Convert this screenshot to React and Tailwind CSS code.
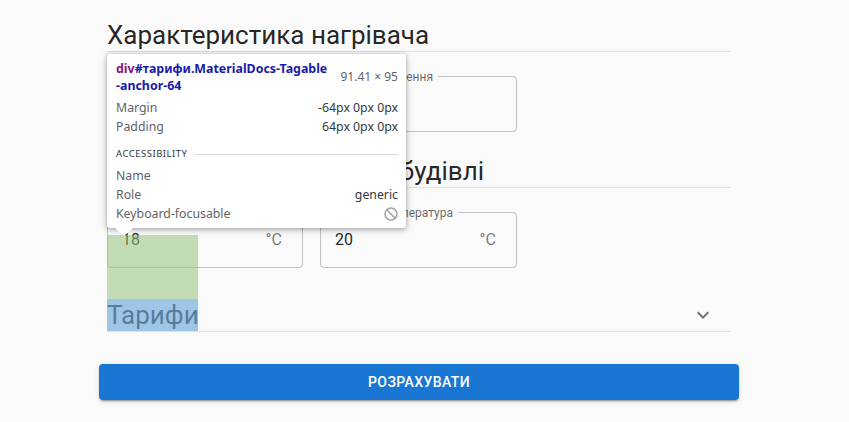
import React from "react";

function Field({ label, labelRight, value, unit, className }) {
  return (
    <div className={"relative h-[56px] rounded-[4px] border border-[rgba(0,0,0,0.23)] flex items-center pl-[14px] pr-[20px] " + className}>
      {label ? (
        <span
          className={
            "absolute top-0 -translate-y-1/2 bg-[#fafafa] px-[5px] text-[12px] leading-none text-[rgba(0,0,0,0.6)] whitespace-nowrap " +
            (labelRight ? "right-[78px]" : "left-[9px]")
          }
        >
          {label}
        </span>
      ) : null}
      <span className="flex-1 text-[16px] text-[rgba(0,0,0,0.87)]">{value}</span>
      {unit ? <span className="text-[16px] text-[rgba(0,0,0,0.54)]">{unit}</span> : null}
    </div>
  );
}

function Heading({ children, inner }) {
  return (
    <div className="h-[32px] border-b border-[#e0e0e0] text-[26px] leading-[31px] text-[rgba(0,0,0,0.87)] whitespace-nowrap">
      {inner ? <div className="flex justify-end w-[377px]"><span>{children}</span></div> : children}
    </div>
  );
}

function Row({ k, v }) {
  return (
    <div className="flex justify-between h-[19px] items-center">
      <span className="text-[#5f6368]">{k}</span>
      <span className="text-[#303942]">{v}</span>
    </div>
  );
}

export default function App() {
  return (
    <div className="relative min-h-[422px] w-[849px] bg-[#fafafa] overflow-hidden" style={{ fontFamily: "Roboto, 'Noto Sans', sans-serif" }}>
      <div className="ml-[99px] w-[640px] pt-[20px]">
        <div className="px-[8px] flex flex-col">
          <Heading>Характеристика нагрівача</Heading>
          <Field className="mt-[24px] w-[410px]" labelRight label="Коефіцієнт корисної дії нагрівача системи опалення" value="" />
          <div className="mt-[24px]">
            <Heading inner>Температурний режим будівлі</Heading>
          </div>
          <div className="mt-[24px] flex gap-[17px]">
            <Field className="w-[196px]" label="Зовнішня" value="18" unit="°C" />
            <Field className="w-[197px]" label="Бажана температура" value="20" unit="°C" />
          </div>
          <div className="relative mt-[31px] h-[33px] border-b border-[#e0e0e0] flex items-center justify-between">
            <span className="text-[26px] leading-[32px] text-[rgba(0,0,0,0.87)]">Тарифи</span>
            <svg width="24" height="24" viewBox="0 0 24 24" className="mr-[16px]" fill="rgba(0,0,0,0.54)">
              <path d="M16.59 8.59 12 13.17 7.41 8.59 6 10l6 6 6-6z" />
            </svg>
            <div className="absolute left-0 top-[-64px] w-[91px] h-[64px] bg-[rgba(147,196,125,0.55)]" />
            <div className="absolute left-0 top-0 w-[91px] h-[32px] bg-[rgba(111,168,220,0.66)]" />
          </div>
        </div>
        <button className="mt-[32px] w-[640px] h-[36px] rounded-[4px] bg-[#1976d2] text-white text-[14px] font-medium tracking-[0.4px] uppercase shadow-[0_3px_1px_-2px_rgba(0,0,0,0.2),0_2px_2px_0_rgba(0,0,0,0.14),0_1px_5px_0_rgba(0,0,0,0.12)]">
          Розрахувати
        </button>
      </div>

      {/* DevTools inspect tooltip */}
      <div
        className="absolute left-[107px] top-[54px] w-[299px] h-[174px] bg-white rounded-[3px] shadow-[0_1px_4px_rgba(0,0,0,0.3),0_2px_10px_rgba(0,0,0,0.15)] pl-[9px] pr-[8px] pt-[6px] text-[12.3px]"
        style={{ fontFamily: "'Noto Sans', sans-serif" }}
      >
        <div className="flex items-center justify-between">
          <div className="font-bold leading-[17px] whitespace-nowrap text-[#1a1aa6] text-[12.4px]">
            <span className="text-[#881280]">div</span>#тарифи.MaterialDocs-Tagable
            <br />
            -anchor-64
          </div>
          <span className="text-[#5f6368] text-[12px]">91.41 × 95</span>
        </div>
        <div className="mt-[5px]">
          <Row k="Margin" v="-64px 0px 0px" />
          <Row k="Padding" v="64px 0px 0px" />
        </div>
        <div className="mt-[10px] flex items-center gap-[8px]">
          <span className="text-[9.5px] tracking-[0.5px] text-[#303942]">ACCESSIBILITY</span>
          <div className="flex-1 border-t border-[#d6d6d6]" />
        </div>
        <div className="mt-[5px]">
          <Row k="Name" v="" />
          <Row k="Role" v="generic" />
          <div className="flex justify-between h-[19px] items-center">
            <span className="text-[#5f6368]">Keyboard-focusable</span>
            <svg width="14" height="14" viewBox="0 0 14 14" fill="none" stroke="#9aa0a6" strokeWidth="1.5">
              <circle cx="7" cy="7" r="6" />
              <path d="M2.8 2.8 11.2 11.2" />
            </svg>
          </div>
        </div>
        <div className="absolute left-[8px] bottom-[-8px] w-0 h-0 border-l-[9px] border-r-[9px] border-t-[8px] border-l-transparent border-r-transparent border-t-white" />
      </div>
    </div>
  );
}
